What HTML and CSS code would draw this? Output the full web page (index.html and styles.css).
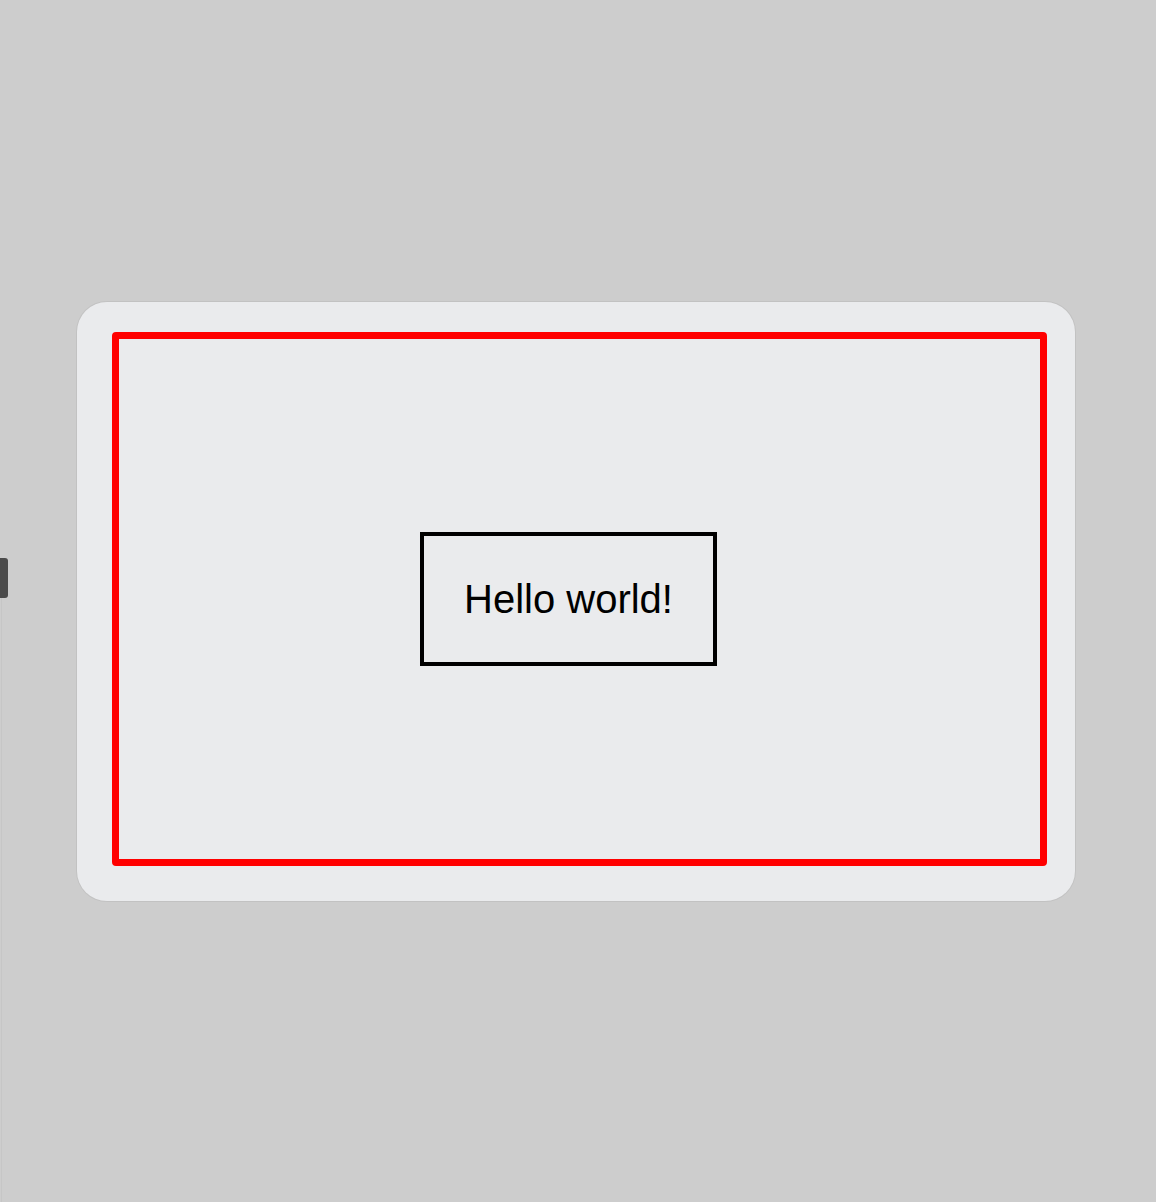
FILE: index.html
```html
<!DOCTYPE html>
<html>
<head>
<meta charset="utf-8">
<link rel="stylesheet" href="styles.css">
</head>
<body>
<div class="edge-line"></div>
<div class="edge-tab"></div>
<main class="stage">
  <section class="card">
    <div class="frame">
      <div class="hello">Hello world!</div>
    </div>
  </section>
</main>
</body>
</html>
```

FILE: styles.css
```css
html, body {
  margin: 0;
  padding: 0;
}
body {
  background: #cdcdcd;
  width: 1156px;
  height: 1202px;
  overflow: hidden;
  font-family: "Liberation Sans", Arial, sans-serif;
  position: relative;
}
.edge-tab {
  position: absolute;
  left: 0;
  top: 558px;
  width: 8px;
  height: 40px;
  background: #4b4b4b;
  border-radius: 0 3px 3px 0;
}
.edge-line {
  position: absolute;
  left: 1px;
  top: 598px;
  width: 1px;
  bottom: 0;
  background: #c6c6c6;
}
.stage {
  padding: 302px 0 0 77px;
}
.card {
  box-sizing: border-box;
  width: 998px;
  height: 599px;
  background: #eaebed;
  border-radius: 30px;
  box-shadow: 0 0 0 1px rgba(0, 0, 0, 0.05);
  padding: 30px 28px 35px 35px;
}
.frame {
  box-sizing: border-box;
  width: 935px;
  height: 534px;
  border: 7px solid #ff0000;
  border-radius: 4px;
  display: flex;
  align-items: center;
  justify-content: center;
}
.hello {
  box-sizing: border-box;
  width: 297px;
  height: 134px;
  margin-right: 22px;
  border: 4px solid #000;
  display: flex;
  align-items: center;
  justify-content: center;
  font-size: 40px;
  color: #000;
}
```
